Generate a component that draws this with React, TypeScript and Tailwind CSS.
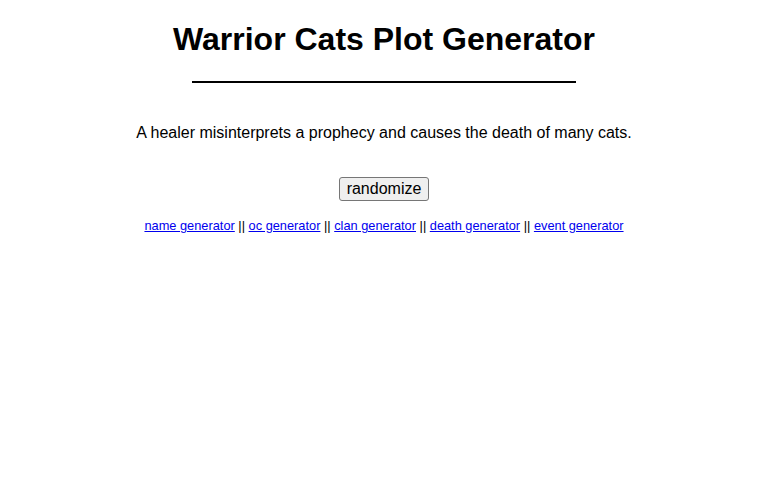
import React from 'react';

const links = ['name generator', 'oc generator', 'clan generator', 'death generator', 'event generator'];

export default function App() {
  return (
    <div className="min-h-[480px] bg-white text-black text-center" style={{ fontFamily: '"Liberation Sans", Arial, sans-serif' }}>
      <h1 className="pt-[21px] text-[32px] leading-[37px] font-bold">Warrior Cats Plot Generator</h1>
      <div className="mx-auto mt-[23px] w-[384px] h-[2px] bg-black" />
      <p className="mt-[41px] text-base leading-[18px]">
        A healer misinterprets a prophecy and causes the death of many cats.
      </p>
      <div className="mt-[35px]">
        <button className="h-[24px] px-[7px] text-base leading-[18px] bg-[#efefef] border border-[#767676] rounded-[3px]">
          randomize
        </button>
      </div>
      <div className="mt-[17px] text-[12.8px] leading-[15px]">
        {links.map((l, i) => (
          <React.Fragment key={l}>
            {i > 0 && ' || '}
            <a href="#" className="text-[#0000ee] underline">{l}</a>
          </React.Fragment>
        ))}
      </div>
    </div>
  );
}
